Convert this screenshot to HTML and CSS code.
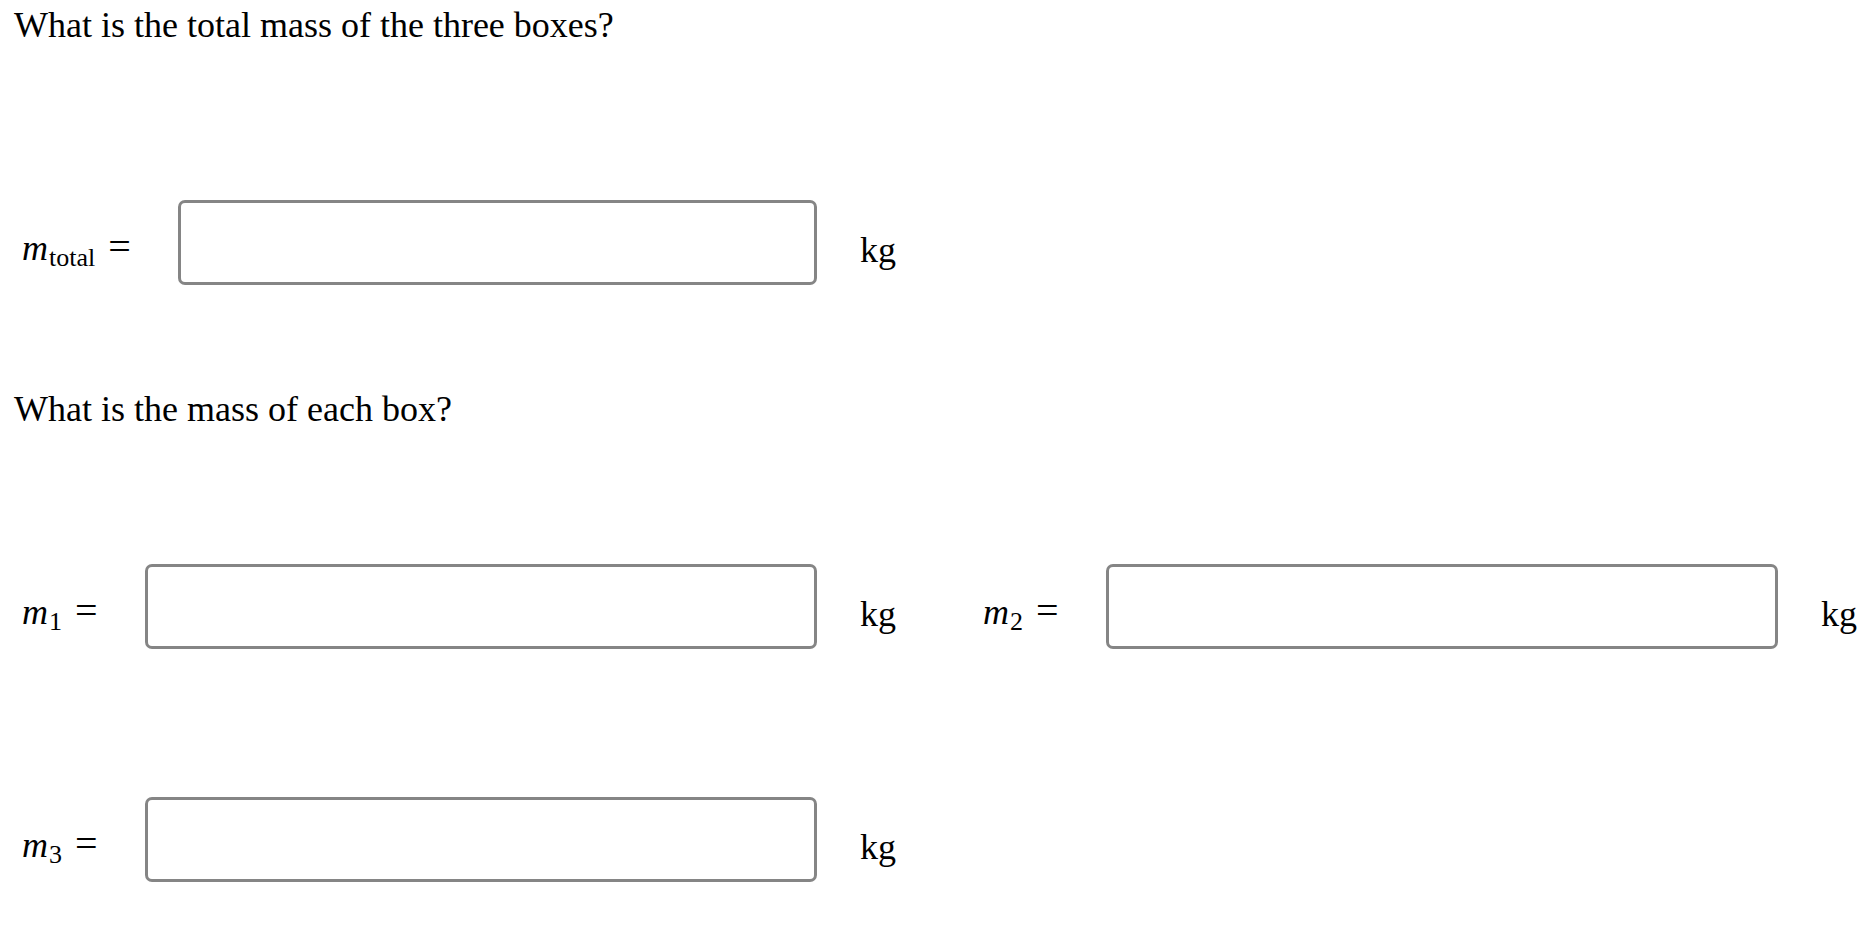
FILE: index.html
```html
<!DOCTYPE html>
<html lang="en">
<head>
<meta charset="utf-8">
<title>Masses of the boxes</title>
<link rel="stylesheet" href="styles.css">
</head>
<body>
<main class="page">
  <p class="question q1">What is the total mass of the three boxes?</p>

  <div class="row row1">
    <div class="field">
      <span class="label"><span class="var">m</span><span class="sub">total</span><span class="eq">=</span></span>
      <span class="box"></span>
      <span class="unit">kg</span>
    </div>
  </div>

  <p class="question q2">What is the mass of each box?</p>

  <div class="row row2">
    <div class="field">
      <span class="label"><span class="var">m</span><span class="sub">1</span><span class="eq">=</span></span>
      <span class="box"></span>
      <span class="unit">kg</span>
    </div>
    <div class="field">
      <span class="label"><span class="var">m</span><span class="sub">2</span><span class="eq">=</span></span>
      <span class="box"></span>
      <span class="unit">kg</span>
    </div>
  </div>

  <div class="row row3">
    <div class="field">
      <span class="label"><span class="var">m</span><span class="sub">3</span><span class="eq">=</span></span>
      <span class="box"></span>
      <span class="unit">kg</span>
    </div>
  </div>
</main>
</body>
</html>
```

FILE: styles.css
```css
html, body {
  margin: 0;
  padding: 0;
  background: #ffffff;
}

body {
  font-family: "Liberation Serif", "Times New Roman", serif;
  color: #000000;
}

.page {
  display: flex;
  flex-direction: column;
  padding: 0 14px;
}

.question {
  margin: 0;
  font-size: 36px;
  line-height: 40px;
  height: 40px;
}

.q1 { margin-top: 5px; }
.q2 { margin-top: 104px; }

.row {
  display: grid;
  grid-template-columns: 874px 874px;
  column-gap: 87px;
  padding-left: 8px;
  height: 85px;
}

.row1 { margin-top: 155px; }
.row2 { margin-top: 135px; }
.row3 { margin-top: 148px; }

.field {
  display: flex;
  align-items: center;
  height: 85px;
}

.label,
.unit {
  font-size: 36px;
  line-height: 40px;
  margin-top: 14px;
  white-space: nowrap;
}

.label {
  display: inline-flex;
  align-items: baseline;
}

.var {
  font-style: italic;
}

.sub {
  font-size: 26px;
  position: relative;
  top: 6px;
  margin-left: 1px;
}

.eq {
  font-size: 40px;
  line-height: 40px;
  margin-left: 13px;
}

.box {
  flex: 1;
  height: 85px;
  box-sizing: border-box;
  border: 3px solid #858585;
  border-radius: 7px;
  background: #ffffff;
  margin: 0 43px 0 47px;
}

.unit {
  width: 36px;
}
```
